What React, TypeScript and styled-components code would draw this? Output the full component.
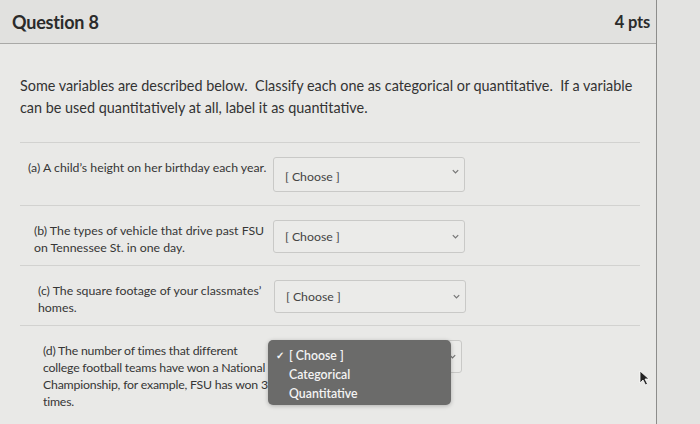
import styled, { createGlobalStyle } from 'styled-components'

const GlobalStyle = createGlobalStyle`
    html, body {
        margin: 0;
        padding: 0;
        background: #e3e3e1;
        font-family: Lato, "Open Sans", sans-serif;
    }
`

const Page = styled.div`
    width: 700px;
    height: 424px;
    overflow: hidden;
    display: flex;
    align-items: flex-start;
    position: relative;
`

const Card = styled.div`
    width: 656px;
    height: 440px;
    flex-shrink: 0;
    border-right: 1px solid #8d8d8b;
    background: #e9e9e7;
    display: flex;
    flex-direction: column;
`

const Header = styled.div`
    height: 44px;
    flex-shrink: 0;
    display: flex;
    align-items: center;
    justify-content: space-between;
    padding: 0 6px 0 12px;
    background: #e1e1df;
    border-bottom: 1px solid #a9a9a7;
    box-sizing: border-box;
    color: #2b2b2b;
    font-size: 18px;
    font-weight: 700;
    letter-spacing: -0.2px;
`

const Pts = styled.span`
    font-size: 16.5px;
`

const Body = styled.div`
    padding: 31px 16px 0 20px;
`

const Intro = styled.p`
    margin: 0;
    font-size: 14.4px;
    line-height: 22px;
    color: #333;
    padding-bottom: 23px;
    border-bottom: 1px solid #d2d2d0;
`

const Row = styled.div<{ $indent: number; $bottom: number }>`
    display: flex;
    align-items: flex-start;
    gap: 5px;
    padding: 14px 0 ${p => p.$bottom}px ${p => p.$indent}px;
    border-bottom: 1px solid #d2d2d0;
    position: relative;
`

const Label = styled.div<{ $width: number; $tight?: boolean }>`
    width: ${p => p.$width}px;
    flex-shrink: 0;
    font-size: 12.3px;
    letter-spacing: ${p => (p.$tight ? -0.2 : 0)}px;
    line-height: 17px;
    color: #363636;
    padding-top: 2px;
    white-space: ${p => (p.$tight ? 'nowrap' : 'normal')};
`

const Select = styled.div<{ $tall: boolean }>`
    width: 192px;
    height: ${p => (p.$tall ? 35 : 33)}px;
    flex-shrink: 0;
    box-sizing: border-box;
    border: 1px solid #c9c9c7;
    border-radius: 3px;
    background: #ebebe9;
    display: flex;
    align-items: ${p => (p.$tall ? 'flex-end' : 'center')};
    justify-content: space-between;
    padding: 0 4px ${p => (p.$tall ? 7 : 0)}px 11px;
    font-size: 12.3px;
    color: #444;
`

const Chevron = styled.svg`
    width: 9px;
    height: 9px;
    align-self: center;
    margin-left: auto;
`

const Menu = styled.div`
    position: absolute;
    left: 248px;
    top: 14px;
    width: 183px;
    height: 65px;
    background: #6b6b6a;
    border-radius: 5px;
    box-shadow: 0 1px 4px rgba(0, 0, 0, 0.25);
    padding: 6px 0 0 8px;
    box-sizing: border-box;
    color: #f4f4f4;
    font-size: 12.3px;
    font-weight: 600;
`

const MenuItem = styled.div`
    display: flex;
    height: 19px;
    line-height: 19px;
`

const Check = styled.span`
    width: 13px;
    font-size: 10px;
`

const Cursor = styled.svg`
    position: absolute;
    left: 639px;
    top: 370px;
    width: 11px;
    height: 16px;
`

const ChevronIcon = () => (
    <Chevron viewBox="0 0 10 10">
        <path d="M2 3.5 L5 6.5 L8 3.5" fill="none" stroke="#777" strokeWidth="1.4" />
    </Chevron>
)

const items = [
    { text: '(a) A child\u2019s height on her birthday each year.', indent: 8, width: 240, tall: true, bottom: 13 },
    { text: '(b) The types of vehicle that drive past FSU on Tennessee St. in one day.', indent: 14, width: 234, tall: false, bottom: 9 },
    { text: '(c) The square footage of your classmates\u2019 homes.', indent: 18, width: 231, tall: false, bottom: 9 },
]

export default function App() {
    return (
        <Page>
            <GlobalStyle />
            <Card>
                <Header>
                    <span>Question 8</span>
                    <Pts>4 pts</Pts>
                </Header>
                <Body>
                    <Intro>
                        Some variables are described below.&nbsp; Classify each one as categorical or quantitative.&nbsp; If a variable can be used quantitatively at all, label it as quantitative.
                    </Intro>
                    { items.map(item =>
                        <Row key={ item.text } $indent={ item.indent } $bottom={ item.bottom }>
                            <Label $width={ item.width }>{ item.text }</Label>
                            <Select $tall={ item.tall }>
                                <span>[ Choose ]</span>
                                <ChevronIcon />
                            </Select>
                        </Row>)
                    }
                    <Row $indent={ 23 } $bottom={ 14 }>
                        <Label $width={ 222 } $tight>
                            (d) The number of times that different<br />
                            college football teams have won a National<br />
                            Championship, for example, FSU has won 3<br />
                            times.
                        </Label>
                        <Select $tall={ false }>
                            <ChevronIcon />
                        </Select>
                        <Menu>
                            <MenuItem><Check>✓</Check>[ Choose ]</MenuItem>
                            <MenuItem><Check />Categorical</MenuItem>
                            <MenuItem><Check />Quantitative</MenuItem>
                        </Menu>
                    </Row>
                </Body>
            </Card>
            <Cursor viewBox="0 0 11 16">
                <path d="M1 1 L1 13 L4 10 L6.5 15 L8.5 14 L6 9 L10 9 Z" fill="#222" stroke="#fff" strokeWidth="0.8" />
            </Cursor>
        </Page>
    )
}
